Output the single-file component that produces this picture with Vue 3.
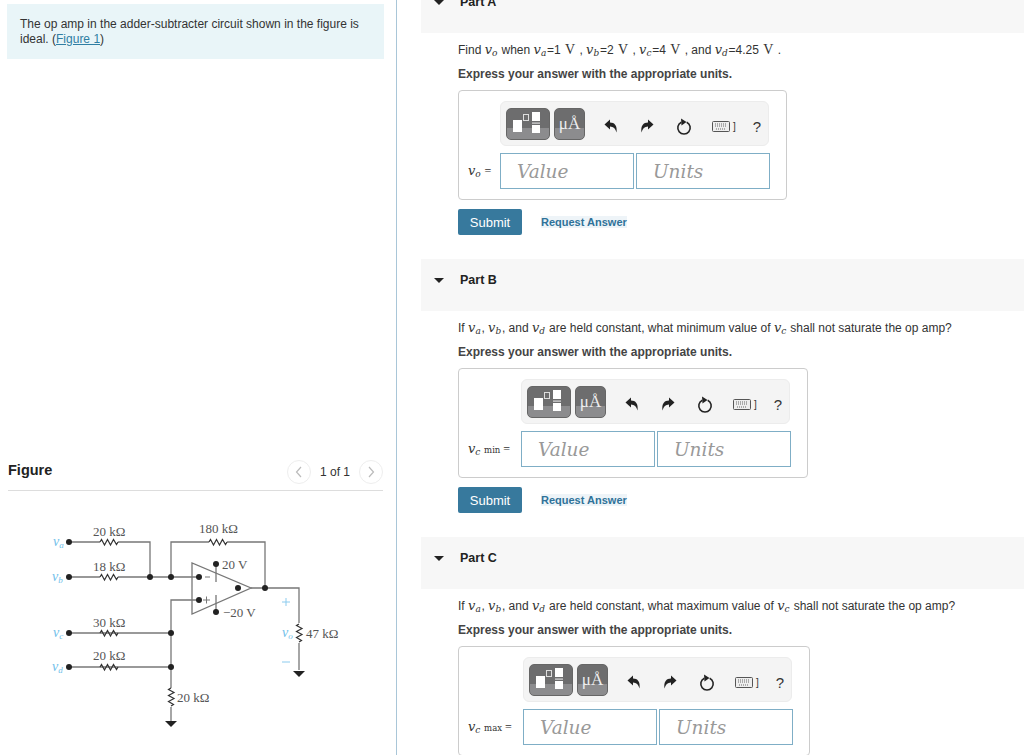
<script setup>
const parts = [
  { id: 'B', label: 'Part B', sub: 'c', tag: 'min', which: 'minimum' },
  { id: 'C', label: 'Part C', sub: 'c', tag: 'max', which: 'maximum' },
]
const zigH = 'l1.5-2.500 3 5.500 3-5.500 3 5.500 3-5.500 3 5 1.500-2.500'
const zigV = 'l-2.500 1.500 5.500 3-5.500 3 5.500 3-5.500 3 5 3-2.500 1.500'
</script>

<template>
  <div class="page">
    <aside class="left">
      <div class="intro">The op amp in the adder-subtracter circuit shown in the figure is ideal. (<a class="flink">Figure 1</a>)</div>
      <div class="fig-head">
        <span class="fig-title">Figure</span>
        <div class="pager">
          <span class="pg"><svg width="10" height="12" viewBox="0 0 10 12"><path d="M7 1 2.500 6 7 11" fill="none" stroke="#bbb" stroke-width="1.200"/></svg></span>
          <span class="pg-text">1 of 1</span>
          <span class="pg"><svg width="10" height="12" viewBox="0 0 10 12"><path d="M3 1 7.500 6 3 11" fill="none" stroke="#bbb" stroke-width="1.200"/></svg></span>
        </div>
      </div>
      <svg class="circuit" width="396" height="245" viewBox="0 0 396 245">
        <g fill="none" stroke="#777" stroke-width="1.300">
          <path d="M69 32H100M118 32H150V67"/>
          <path d="M69 67H100M118 67H199"/>
          <path d="M171 67V32H209M227 32H265V78"/>
          <path d="M192 53V104L251 78Z"/>
          <path d="M199 90H171V178M171 197V211"/>
          <path d="M69 123H171"/>
          <path d="M69 157H171"/>
          <path d="M251 78H299V113M299 133V160"/>
          <path d="M216 54V72M216 85V102"/>
          <path d="M205 67H210M203 90H210M206.500 86.500V93.500" stroke-width="1"/>
        </g>
        <g fill="none" stroke="#333" stroke-width="1.200">
          <path :d="'M100 32' + zigH"/><path :d="'M100 67' + zigH"/>
          <path :d="'M100 123' + zigH"/><path :d="'M100 157' + zigH"/>
          <path :d="'M209 32' + zigH"/>
          <path :d="'M171 178' + zigV"/><path :d="'M299 114' + zigV"/>
        </g>
        <g fill="#222">
          <circle cx="69" cy="32" r="3"/><circle cx="69" cy="67" r="3"/>
          <circle cx="69" cy="123" r="3"/><circle cx="69" cy="157" r="3"/>
          <circle cx="150" cy="67" r="3"/><circle cx="171" cy="67" r="3"/>
          <circle cx="171" cy="123" r="3"/><circle cx="171" cy="157" r="3"/>
          <circle cx="199" cy="67" r="3"/><circle cx="199" cy="90" r="3"/>
          <circle cx="216" cy="54" r="3"/><circle cx="216" cy="102" r="3"/>
          <circle cx="238" cy="78" r="3"/><circle cx="265" cy="78" r="3"/>
          <path d="M165 211H177L171 217Z"/><path d="M293 161H305L299 167Z"/>
        </g>
        <g class="ct">
          <text x="93" y="26">20 kΩ</text><text x="93" y="61">18 kΩ</text>
          <text x="93" y="117">30 kΩ</text><text x="93" y="150">20 kΩ</text>
          <text x="199" y="23">180 kΩ</text>
          <text x="222" y="59">20 V</text><text x="223" y="107">−20 V</text>
          <text x="177" y="192">20 kΩ</text><text x="306" y="128">47 kΩ</text>
        </g>
        <g class="cv">
          <text x="53" y="36">v<tspan class="sb" dy="2">a</tspan></text>
          <text x="52" y="71">v<tspan class="sb" dy="2">b</tspan></text>
          <text x="53" y="127">v<tspan class="sb" dy="2">c</tspan></text>
          <text x="52" y="161">v<tspan class="sb" dy="2">d</tspan></text>
          <text x="282" y="127">v<tspan class="sb" dy="2">o</tspan></text>
        </g>
        <path d="M282 92H290M286 88V96M282 152H290" stroke="#8ccbee" fill="none"/>
      </svg>
    </aside>

    <main class="right">
      <section class="part">
        <header class="band"><span class="caret"></span><span class="plabel">Part A</span></header>
        <div class="body">
          <p class="q">Find <i class="v">v<sub>o</sub></i> when <i class="v">v<sub>a</sub></i>=1 <span class="u">V</span> , <i class="v">v<sub>b</sub></i>=2 <span class="u">V</span> , <i class="v">v<sub>c</sub></i>=4 <span class="u">V</span> , and <i class="v">v<sub>d</sub></i>=4.25 <span class="u">V</span> .</p>
          <p class="exp">Express your answer with the appropriate units.</p>
          <div class="box box-A">
            <div class="toolbar">
              <span class="tbtn wide"><svg width="44" height="32" viewBox="0 0 44 32"><rect x="7" y="12" width="9" height="12" fill="#fff"/><rect x="17.500" y="6.500" width="5" height="6" fill="none" stroke="#ddd"/><rect x="26" y="4" width="8" height="9" fill="#fff"/><rect x="26" y="14.500" width="8" height="1.200" fill="#ddd"/><rect x="26" y="17" width="8" height="8" fill="#fff"/></svg></span>
              <span class="tbtn mu">μÅ</span>
              <span class="tools">
                <svg width="14" height="14" viewBox="0 0 14 14"><path d="M0.500 5.500 6 0.500V3.500C10.500 3.500 13.500 6.500 12.500 13.500 11.500 9.500 9.500 7.500 6 7.500V10.500Z" fill="#222"/></svg>
                <svg width="14" height="14" viewBox="0 0 14 14"><path d="M13.500 5.500 8 0.500V3.500C3.500 3.500 0.500 6.500 1.500 13.500 2.500 9.500 4.500 7.500 8 7.500V10.500Z" fill="#222"/></svg>
                <svg width="16" height="17" viewBox="0 0 16 17"><path d="M10.700 4.200A6.200 6.200 0 1 1 5.300 4.200" fill="none" stroke="#222" stroke-width="1.600"/><path d="M5 0.500 10.500 4 5.500 7.500Z" fill="#222"/></svg>
                <span class="kb"><svg width="18" height="11" viewBox="0 0 18 11"><rect x=".5" y=".5" width="17" height="10" rx="1" fill="#eee" stroke="#555"/><path d="M3 3H15M3 5H15M4 8H14" stroke="#666" stroke-dasharray="1 1"/></svg><b>]</b></span>
                <span class="help">?</span>
              </span>
            </div>
            <div class="line">
              <span class="sym"><i class="v">v<sub>o</sub></i> =</span>
              <span class="fld">Value</span><span class="fld">Units</span>
            </div>
          </div>
          <div class="actions"><button class="submit">Submit</button><a class="req">Request Answer</a></div>
        </div>
      </section>

      <section v-for="p in parts" :key="p.id" class="part">
        <header class="band"><span class="caret"></span><span class="plabel">{{ p.label }}</span></header>
        <div class="body">
          <p class="q">If <i class="v">v<sub>a</sub></i>, <i class="v">v<sub>b</sub></i>, and <i class="v">v<sub>d</sub></i> are held constant, what {{ p.which }} value of <i class="v">v<sub>c</sub></i> shall not saturate the op amp?</p>
          <p class="exp">Express your answer with the appropriate units.</p>
          <div class="box" :class="'box-' + p.id">
            <div class="toolbar">
              <span class="tbtn wide"><svg width="44" height="32" viewBox="0 0 44 32"><rect x="7" y="12" width="9" height="12" fill="#fff"/><rect x="17.500" y="6.500" width="5" height="6" fill="none" stroke="#ddd"/><rect x="26" y="4" width="8" height="9" fill="#fff"/><rect x="26" y="14.500" width="8" height="1.200" fill="#ddd"/><rect x="26" y="17" width="8" height="8" fill="#fff"/></svg></span>
              <span class="tbtn mu">μÅ</span>
              <span class="tools">
                <svg width="14" height="14" viewBox="0 0 14 14"><path d="M0.500 5.500 6 0.500V3.500C10.500 3.500 13.500 6.500 12.500 13.500 11.500 9.500 9.500 7.500 6 7.500V10.500Z" fill="#222"/></svg>
                <svg width="14" height="14" viewBox="0 0 14 14"><path d="M13.500 5.500 8 0.500V3.500C3.500 3.500 0.500 6.500 1.500 13.500 2.500 9.500 4.500 7.500 8 7.500V10.500Z" fill="#222"/></svg>
                <svg width="16" height="17" viewBox="0 0 16 17"><path d="M10.700 4.200A6.200 6.200 0 1 1 5.300 4.200" fill="none" stroke="#222" stroke-width="1.600"/><path d="M5 0.500 10.500 4 5.500 7.500Z" fill="#222"/></svg>
                <span class="kb"><svg width="18" height="11" viewBox="0 0 18 11"><rect x=".5" y=".5" width="17" height="10" rx="1" fill="#eee" stroke="#555"/><path d="M3 3H15M3 5H15M4 8H14" stroke="#666" stroke-dasharray="1 1"/></svg><b>]</b></span>
                <span class="help">?</span>
              </span>
            </div>
            <div class="line">
              <span class="sym"><i class="v">v<sub>{{ p.sub }}</sub></i> <span class="mm">{{ p.tag }}</span> =</span>
              <span class="fld">Value</span><span class="fld">Units</span>
            </div>
          </div>
          <div v-if="p.id === 'B'" class="actions"><button class="submit">Submit</button><a class="req">Request Answer</a></div>
        </div>
      </section>
    </main>
  </div>
</template>

<style>
html, body { margin: 0; overflow: hidden; background: #fff; }
</style>

<style scoped>
.page { display: flex; width: 1024px; height: 755px; overflow: hidden; font-family: "Liberation Sans", Arial, sans-serif; color: #333; }
.left { width: 396px; flex: none; border-right: 1px solid #a9c6d8; padding-top: 4px; }
.intro { margin-left: 7px; width: 377px; height: 55px; box-sizing: border-box; background: #e9f5f8; padding: 13px 13px; line-height: 15px; font-size: 12px; color: #333; }
.flink { color: #2f7ea3; text-decoration: underline; }
.fig-head { display: flex; justify-content: space-between; align-items: center; margin: 394px 13px 0 8px; height: 38px; border-bottom: 1px solid #ddd; box-sizing: border-box; }
.fig-title { font-weight: bold; font-size: 14.500px; color: #222; position: relative; top: -2px; }
.pager { display: flex; align-items: center; gap: 9px; font-size: 12px; color: #333; }
.pg { width: 24px; height: 24px; border: 1px solid #eee; border-radius: 50%; box-sizing: border-box; display: flex; align-items: center; justify-content: center; }
.circuit { display: block; margin-top: 19px; }
.ct text { font-family: "Liberation Serif", serif; font-size: 13px; fill: #555; }
.cv text { font-family: "Liberation Serif", serif; font-style: italic; font-size: 14px; fill: #6fc0ea; }
.cv .sb { font-size: 9px; }

.right { flex: 1; min-width: 0; padding-left: 24px; margin-top: -19px; }
.part { height: 278px; }
.band { height: 52px; background: #f7f7f7; display: flex; align-items: flex-start; padding: 13px 0 0 13px; box-sizing: border-box; }
.caret { width: 0; height: 0; border-left: 5px solid transparent; border-right: 5px solid transparent; border-top: 5px solid #222; margin-top: 6px; }
.plabel { margin-left: 16px; font-weight: bold; font-size: 12.500px; color: #222; line-height: 16px; }
.body { padding-left: 37px; }
.q { margin: 0; padding-top: 9px; line-height: 16px; font-size: 12px; color: #333; white-space: nowrap; }
.exp { margin: 8px 0 0; line-height: 16px; font-size: 12px; font-weight: bold; color: #444; }
.v { font-family: "DejaVu Serif", serif; font-style: italic; font-size: 13px; margin-right: 0.7px; }
.v sub { font-size: 9px; line-height: 0; vertical-align: -2px; }
.u { font-family: "Liberation Serif", serif; font-size: 14px; padding: 0 1px; }
.box { margin-top: 8px; height: 110px; border: 1px solid #ccc; border-radius: 4px; box-sizing: border-box; background: #fff; padding-top: 10px; --lead: 41px; width: 329px; padding-left: var(--lead); }
.box-B { --lead: 62px; width: 350px; }
.box-C { --lead: 64px; width: 352px; }
.toolbar { width: 269px; height: 45px; background: #f4f4f4; border: 1px solid #ececec; border-radius: 6px; box-sizing: border-box; display: flex; align-items: center; padding-left: 5px; gap: 4px; }
.tbtn { height: 32px; border-radius: 5px; background: linear-gradient(#6d6d6e 0 62%, #8c8c8e 62% 100%); border: 1px solid #666; box-sizing: border-box; display: flex; align-items: center; justify-content: center; }
.tbtn.wide { width: 44px; }
.tbtn svg { flex: none; }
.tbtn.mu { width: 31px; color: #eee; font-family: "Liberation Serif", serif; font-size: 17px; }
.tools { display: flex; align-items: center; gap: 22px; margin-left: 15px; padding-top: 5px; color: #333; }
.kb { display: flex; align-items: center; gap: 3px; margin-left: -2px; }
.kb b { font-size: 10px; font-weight: normal; }
.help { font-size: 15px; margin-left: -5px; }
.line { display: flex; align-items: center; margin-top: 7px; margin-left: calc(0px - var(--lead)); }
.sym { width: var(--lead); flex: none; box-sizing: border-box; padding-left: 9px; font-family: "Liberation Serif", serif; font-size: 12px; white-space: nowrap; color: #333; }
.mm { font-family: "DejaVu Serif", serif; font-size: 8.500px; }
.fld { width: 134px; height: 36px; box-sizing: border-box; border: 1px solid #7faec6; background: #fff; font-family: "DejaVu Serif", "Liberation Serif", serif; font-style: italic; font-size: 18.500px; color: #999; padding-left: 16px; line-height: 36px; }
.fld + .fld { margin-left: 2px; }
.actions { display: flex; align-items: center; margin-top: 9px; }
.submit { width: 64px; height: 26px; border: 0; border-radius: 2px; background: #37799d; color: #fff; font-family: "Liberation Sans", sans-serif; font-size: 13px; padding: 0; }
.req { margin-left: 19px; color: #2f7299; font-size: 11px; font-weight: bold; background: #eef4f8; }
</style>
